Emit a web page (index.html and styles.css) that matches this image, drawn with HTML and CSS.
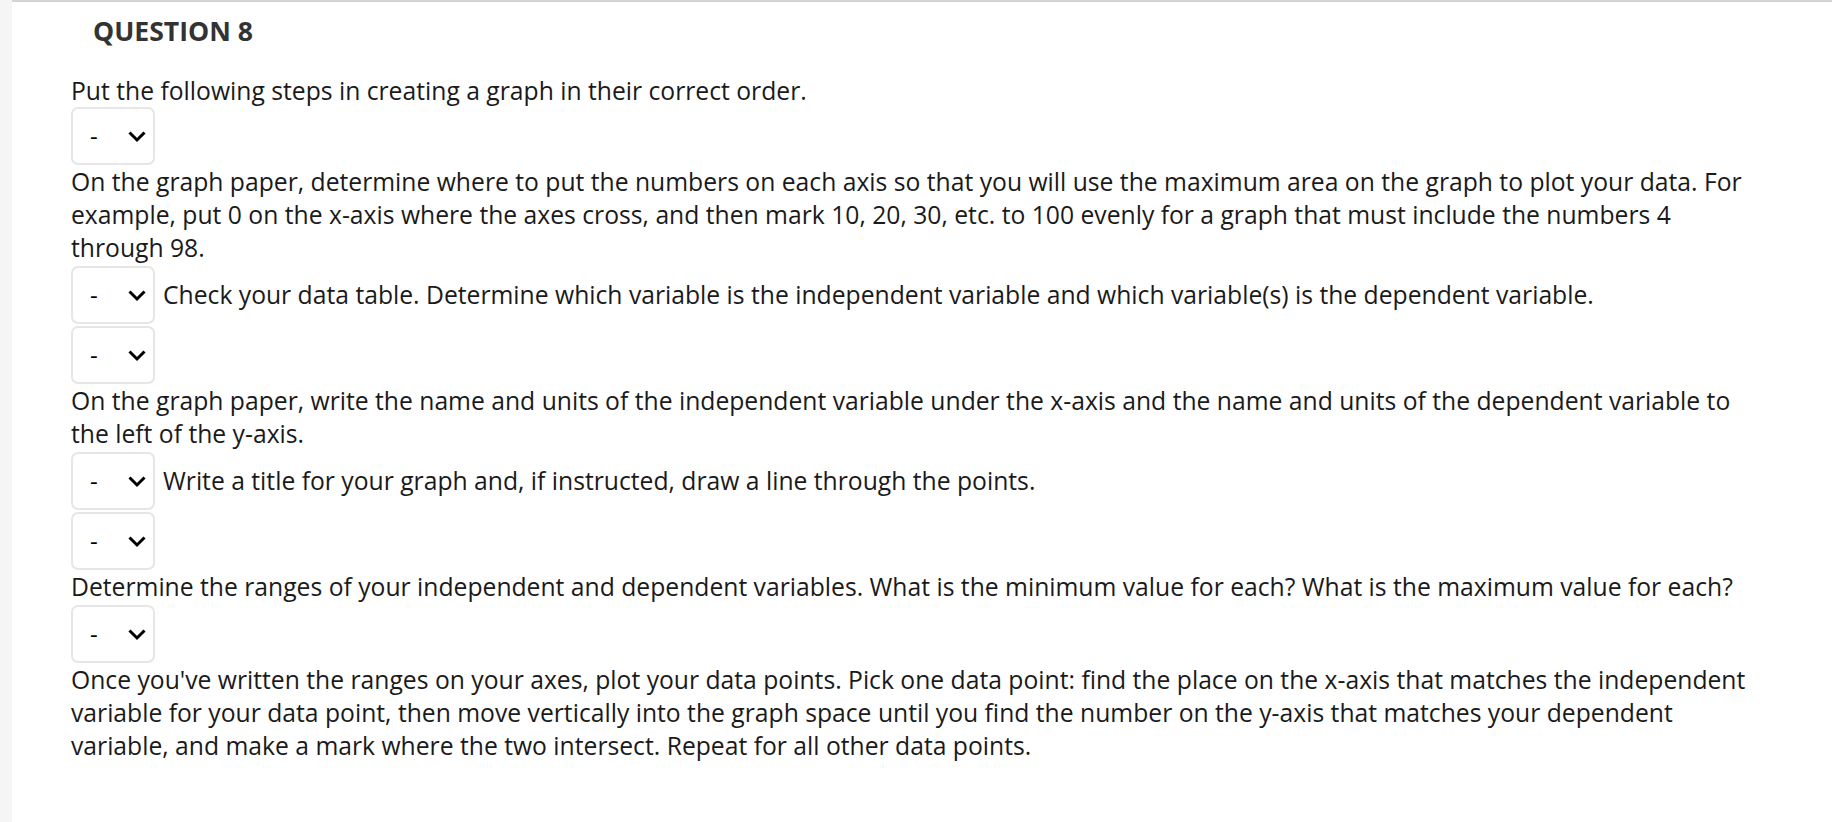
FILE: index.html
```html
<!DOCTYPE html>
<html lang="en">
<head>
    <meta charset="UTF-8">
    <title>Question 8</title>
    <link rel="stylesheet" href="styles.css">
</head>
<body>
    <div class="page">
        <h2 class="title">QUESTION 8</h2>
        <div class="question">
            <p class="prompt">Put the following steps in creating a graph in their correct order.</p>

            <div class="item">
                <span class="pick">
                    <select><option>-</option><option>1</option><option>2</option><option>3</option><option>4</option><option>5</option><option>6</option></select>
                    <svg class="chev" width="18" height="12" viewBox="0 0 18 12"><path d="M1.5 1.5 L9 9 L16.5 1.5" fill="none" stroke="#000" stroke-width="3"/></svg>
                </span>
                <span class="label">On the graph paper, determine where to put the numbers on each axis so that you will use the maximum area on the graph to plot your data. For example, put 0 on the x-axis where the axes cross, and then mark 10, 20, 30, etc. to 100 evenly for a graph that must include the numbers 4 through 98.</span>
            </div>

            <div class="item">
                <span class="pick">
                    <select><option>-</option><option>1</option><option>2</option><option>3</option><option>4</option><option>5</option><option>6</option></select>
                    <svg class="chev" width="18" height="12" viewBox="0 0 18 12"><path d="M1.5 1.5 L9 9 L16.5 1.5" fill="none" stroke="#000" stroke-width="3"/></svg>
                </span>
                <span class="label">Check your data table. Determine which variable is the independent variable and which variable(s) is the dependent variable.</span>
            </div>

            <div class="item">
                <span class="pick">
                    <select><option>-</option><option>1</option><option>2</option><option>3</option><option>4</option><option>5</option><option>6</option></select>
                    <svg class="chev" width="18" height="12" viewBox="0 0 18 12"><path d="M1.5 1.5 L9 9 L16.5 1.5" fill="none" stroke="#000" stroke-width="3"/></svg>
                </span>
                <span class="label">On the graph paper, write the name and units of the independent variable under the x-axis and the name and units of the dependent variable to the left of the y-axis.</span>
            </div>

            <div class="item">
                <span class="pick">
                    <select><option>-</option><option>1</option><option>2</option><option>3</option><option>4</option><option>5</option><option>6</option></select>
                    <svg class="chev" width="18" height="12" viewBox="0 0 18 12"><path d="M1.5 1.5 L9 9 L16.5 1.5" fill="none" stroke="#000" stroke-width="3"/></svg>
                </span>
                <span class="label">Write a title for your graph and, if instructed, draw a line through the points.</span>
            </div>

            <div class="item">
                <span class="pick">
                    <select><option>-</option><option>1</option><option>2</option><option>3</option><option>4</option><option>5</option><option>6</option></select>
                    <svg class="chev" width="18" height="12" viewBox="0 0 18 12"><path d="M1.5 1.5 L9 9 L16.5 1.5" fill="none" stroke="#000" stroke-width="3"/></svg>
                </span>
                <span class="label">Determine the ranges of your independent and dependent variables. What is the minimum value for each? What is the maximum value for each?</span>
            </div>

            <div class="item">
                <span class="pick">
                    <select><option>-</option><option>1</option><option>2</option><option>3</option><option>4</option><option>5</option><option>6</option></select>
                    <svg class="chev" width="18" height="12" viewBox="0 0 18 12"><path d="M1.5 1.5 L9 9 L16.5 1.5" fill="none" stroke="#000" stroke-width="3"/></svg>
                </span>
                <span class="label">Once you've written the ranges on your axes, plot your data points. Pick one data point: find the place on the x-axis that matches the independent variable for your data point, then move vertically into the graph space until you find the number on the y-axis that matches your dependent variable, and make a mark where the two intersect. Repeat for all other data points.</span>
            </div>
        </div>
    </div>
</body>
</html>
```

FILE: styles.css
```css
* {
    margin: 0;
    padding: 0;
    box-sizing: border-box;
}
body {
    background-color: #f5f5f5;
    font-family: "Open Sans", "Noto Sans", sans-serif;
    color: #1a1a1a;
}
.page {
    margin-left: 12px;
    min-height: 100vh;
    background-color: #fff;
    border-top: 2px solid #d4d4d4;
}
.title {
    padding: 11px 0 0 81px;
    font-size: 26.6px;
    font-weight: 700;
    line-height: 1.36;
    color: #333;
}
.question {
    padding: 24.5px 66px 0 59px;
    font-size: 24.7px;
    line-height: 33px;
}
.item {
    display: flex;
    flex-wrap: wrap;
    align-items: center;
    column-gap: 8px;
    margin-bottom: 2px;
}
.pick {
    position: relative;
    display: flex;
}
.pick select {
    appearance: none;
    -webkit-appearance: none;
    width: 84px;
    height: 58px;
    padding-left: 17px;
    border: 2px solid #e6e6e6;
    border-radius: 7px;
    background-color: #fff;
    font-family: inherit;
    font-size: 24px;
    color: #000;
    cursor: pointer;
}
/* the arrow sits over the right side of the select */
.chev {
    position: absolute;
    right: 9px;
    top: 24px;
    pointer-events: none;
}
.label {
    color: #1a1a1a;
}
```
